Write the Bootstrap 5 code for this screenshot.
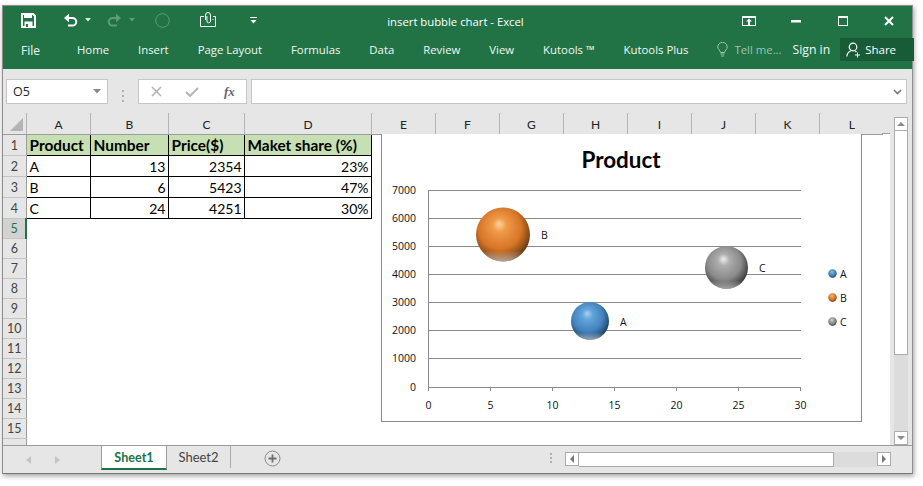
<!DOCTYPE html>
<html lang="en">
<head>
<meta charset="utf-8">
<title>insert bubble chart - Excel</title>
<link href="https://cdn.jsdelivr.net/npm/bootstrap@5.3.0/dist/css/bootstrap.min.css" rel="stylesheet">
<style>
html,body{margin:0;height:486px;background:#fff;overflow:hidden}
body{font-family:"Open Sans","Noto Sans",sans-serif;}
.xl-win{position:relative;margin:5px 0 0 2px;width:911px;height:469px;border:1px solid #8f8f8f;border-bottom-color:#777;background:#e6e6e6;box-shadow:1px 2px 5px rgba(0,0,0,.38)}
.xl-title{height:31px;background:#217346;color:#fff;display:grid;grid-template-columns:1fr auto 1fr;align-items:center;font-size:11.3px}
.xl-title-txt{padding-right:4px;padding-top:2px}
.xl-qat{padding:0 0 3px 18px}
.xl-qat svg,.xl-winbtn svg{display:block}
.m-a{margin-left:27px}.m-b{margin-left:7px}.m-c{margin-left:16px}.m-d{margin-left:7px}.m-e{margin-left:20px}.m-f{margin-left:30px}.m-g{margin-left:33px}
.xl-winbtn{padding:0 18px 1px 0}
.w-a{margin-left:35px}.w-b{margin-left:37px}.w-c{margin-left:36px}
.xl-tabs{height:32px;background:#217346;color:#f2f7f4;font-size:11.35px;padding:0 0 7px 18px;gap:29px;white-space:nowrap}
.xl-tabs .t-file{margin-right:8px;font-size:12px;padding-top:2px}
.xl-tell{color:#9dc4ad;gap:6px;margin-right:11px}
.xl-sign{margin-right:10px;font-size:12.2px;padding-top:2px}
.xl-share{width:74px;height:23px;background:#185c37;gap:4px;padding-left:6px;color:#fff;font-size:11.5px}
.xl-fbar{height:44px;padding:10px 5px 0 3px}
.xl-box{height:25px;background:#fff;border:1px solid #c6c6c6}
.xl-name{width:102px;font-size:12.5px;color:#222;padding:0 6px}
.xl-name span{padding-top:2px}
.xl-dots{width:30px}
.xl-fx{width:109px;padding-left:11px;gap:22px}
.xl-fxt{font-family:"Liberation Serif",serif;font-style:italic;font-weight:700;color:#666;font-size:13px;margin-left:3px}
.xl-input{margin-left:4px;flex:1 1 auto;padding-right:4px}
.xl-main{height:332px}
.xl-sheet{position:relative;width:888px;height:332px;background:#fff;overflow:hidden}
.xl-grid{border-collapse:collapse;table-layout:fixed;width:880px;font-family:Lato,"Liberation Sans",sans-serif;color:#000}
.xl-grid th,.xl-grid td{padding:3px 0 0;line-height:1;overflow:hidden;white-space:nowrap}
.xl-grid thead th{height:21px;background:#e6e6e6;font-weight:400;font-size:12px;text-align:center;color:#222;border-right:1px solid #b4b4b4;border-bottom:1px solid #9c9c9c;padding:3px 0 0 1px}
.xl-grid thead th:last-child{border-right:0}
.xl-grid tbody th{background:#e6e6e6;font-weight:400;font-size:12.5px;text-align:center;color:#444;border-right:1px solid #9c9c9c;border-bottom:1px solid #c4c4c4}
.xl-grid tr.r21{height:21px}.xl-grid tr.r20{height:20px}.xl-grid tr.r7{height:7px}
.xl-grid td.xl-d{border:1px solid #000;font-size:14px;padding:3px 2px 0 3px}
.xl-grid td.xl-h{background:#c6e0b4;font-weight:700;font-size:15.4px;padding-top:3px}
.xl-grid tbody th.xl-sel{background:#d2d2d2;color:#217346;border-right:2px solid #217346}
.xl-corner{position:relative}
.xl-corner svg{position:absolute;left:7px;top:5px}
.xl-fill{position:absolute;right:0;top:0;width:8px;height:21px;background:#e6e6e6;border-bottom:1px solid #9c9c9c}
.xl-chart{position:absolute;left:378px;top:21px;width:481px;height:288px;background:#fff;border:1px solid #8c8c8c;border-top:0}
.xl-chart svg{display:block}
.xl-vs{width:22px;padding:4px 4px 0 4px}
.xl-sbtn{width:14px;height:14px;background:#fff;border:1px solid #ababab;flex:0 0 auto}
.xl-track{width:14px;background:#dcdcdc;flex:1 1 auto}
.xl-thumb{height:224px;background:#fff;border:1px solid #ababab;border-top:0;width:14px;display:block}
.xl-bottom{height:28px;position:relative}
.xl-nav{width:98px;padding-left:23px;gap:22px}
.xl-tab1{width:66px;height:24px;background:#fff;border:1px solid #9c9c9c;border-top:0;border-bottom:2px solid #217346;color:#217346;font-weight:700;font-size:12.6px;font-family:Lato,sans-serif;padding-top:2px}
.xl-tab2{width:64px;height:22px;font-size:13px;color:#444;font-family:Lato,"Open Sans",sans-serif;border-right:1px solid #aaa;padding-top:2px}
.xl-plus{margin-left:33px}
.xl-rest{flex:1 1 auto;height:27px;padding-right:21px;padding-top:6px}
.xl-hs{width:326px;height:15px}
.xl-hthumb{width:255px;height:15px;background:#fff;border:1px solid #ababab;border-left:0}
.xl-htrack{flex:1 1 auto;height:15px;background:#dcdcdc}
.xl-hdots{margin-right:12px}
.xl-sheetline{border-top:1px solid #9c9c9c}
</style>
</head>
<body>
<div class="xl-win">
  <div class="xl-title">
    <div class="xl-qat d-flex align-items-center">
      <svg width="15" height="15" viewBox="0 0 15 15"><path d="M1 1h11l2 2v11H1z" fill="none" stroke="#fff" stroke-width="2"/><rect x="3" y="1" width="8" height="4" fill="#fff"/><rect x="3.5" y="8.5" width="8" height="5.5" fill="#fff"/><rect x="5" y="11" width="2" height="3" fill="#217346"/></svg>
      <svg class="m-a" width="15" height="14" viewBox="0 0 15 14"><path d="M1 5 6 .8v8.4z" fill="#fff"/><path d="M5 5h4.5a3.8 3.8 0 0 1 0 7.6H5" fill="none" stroke="#fff" stroke-width="2"/></svg>
      <svg class="m-b" width="6" height="4" viewBox="0 0 6 4"><path d="M0 0h6L3 3.5z" fill="#dcebe2"/></svg>
      <svg class="m-c" width="15" height="14" viewBox="0 0 15 14"><path d="M14 5 9 .8v8.4z" fill="#5c9c79"/><path d="M10 5H5.5a3.8 3.8 0 0 0 0 7.6H10" fill="none" stroke="#5c9c79" stroke-width="2"/></svg>
      <svg class="m-d" width="6" height="4" viewBox="0 0 6 4"><path d="M0 0h6L3 3.5z" fill="#5c9c79"/></svg>
      <svg class="m-e" width="15" height="15" viewBox="0 0 15 15"><circle cx="7.5" cy="7.5" r="6.8" fill="none" stroke="#5c9c79"/></svg>
      <svg class="m-f" width="17" height="16" viewBox="0 0 17 16"><path d="M4 4.500H.5v10h15v-10H13M12.500 7.500h1" fill="none" stroke="#fff"/><path d="M5.500 8V3a2.500 2.500 0 0 1 5 0v6a1.800 1.800 0 0 1-3.600 0V4" fill="none" stroke="#fff"/></svg>
      <svg class="m-g" width="7" height="8" viewBox="0 0 7 8"><rect y="1" width="7" height="1" fill="#fff"/><path d="M.5 4h6L3.500 7.500z" fill="#fff"/></svg>
    </div>
    <div class="xl-title-txt">insert bubble chart - Excel</div>
    <div class="xl-winbtn d-flex align-items-center justify-content-end">
      <svg width="14" height="10" viewBox="0 0 14 10"><rect x=".5" y=".5" width="13" height="9" fill="none" stroke="#fff"/><rect x="0" y="0" width="14" height="2" fill="#fff"/><path d="M7 2.500 10 5.500H8V9H6V5.500H4z" fill="#fff"/></svg>
      <svg class="w-a" width="10" height="3" viewBox="0 0 10 3"><rect width="10" height="2.500" fill="#fff"/></svg>
      <svg class="w-b" width="10" height="10" viewBox="0 0 10 10"><rect x=".5" y=".5" width="9" height="9" fill="none" stroke="#fff"/><rect width="10" height="2" fill="#fff"/></svg>
      <svg class="w-c" width="10" height="10" viewBox="0 0 10 10"><path d="M1 1l8 8M9 1l-8 8" stroke="#fff" stroke-width="2"/></svg>
    </div>
  </div>
  <div class="xl-tabs d-flex align-items-center">
    <span class="t-file">File</span><span>Home</span><span>Insert</span><span>Page Layout</span><span>Formulas</span><span>Data</span><span>Review</span><span>View</span><span>Kutools ™</span><span>Kutools Plus</span>
    <div class="d-flex align-items-center ms-auto">
      <span class="xl-tell d-flex align-items-center"><svg width="11" height="15" viewBox="0 0 11 15"><path d="M3.500 10.500C3 8 .8 7.500.8 5a4.700 4.700 0 0 1 9.400 0c0 2.500-2.200 3-2.700 5.500z" fill="none" stroke="#9dc4ad"/><path d="M3.500 12h4M4 14h3" stroke="#9dc4ad"/></svg>Tell me...</span>
      <span class="xl-sign">Sign in</span>
      <span class="xl-share d-flex align-items-center"><svg width="15" height="16" viewBox="0 0 15 16"><circle cx="7" cy="5" r="3.800" fill="none" stroke="#fff" stroke-width="1.200"/><path d="M.8 14.500C1 11.500 3 9.500 5 8.700M9 9l1.500 1" fill="none" stroke="#fff" stroke-width="1.200"/><path d="M11.500 10.500v5M9 13h5" stroke="#fff"/></svg>Share</span>
    </div>
  </div>
  <div class="xl-fbar d-flex">
    <div class="xl-box xl-name d-flex align-items-center justify-content-between"><span>O5</span><svg width="8" height="5" viewBox="0 0 8 5"><path d="M0 0h8L4 4.500z" fill="#8a8a8a"/></svg></div>
    <div class="xl-dots d-flex align-items-center justify-content-center"><svg width="3" height="12" viewBox="0 0 3 12"><path d="M0 0h2v2H0zM0 5h2v2H0zM0 10h2v2H0z" fill="#b0b0b0"/></svg></div>
    <div class="xl-box xl-fx d-flex align-items-center"><svg width="13" height="11" viewBox="0 0 13 11"><path d="M2 1l9 9M11 1l-9 9" stroke="#b4b4b4" stroke-width="1.600"/></svg><svg width="14" height="11" viewBox="0 0 14 11"><path d="M1 6l4 4 8-8" fill="none" stroke="#b4b4b4" stroke-width="2"/></svg><span class="xl-fxt">fx</span></div>
    <div class="xl-box xl-input d-flex align-items-center justify-content-end"><svg width="9" height="6" viewBox="0 0 9 6"><path d="M1 1l3.500 3.500L8 1" fill="none" stroke="#777" stroke-width="1.600"/></svg></div>
  </div>
  <div class="xl-main d-flex">
    <div class="xl-sheet">
      <table class="xl-grid">
        <colgroup><col style="width:23px"><col style="width:64px"><col style="width:78px"><col style="width:76px"><col style="width:127px"><col style="width:64px"><col style="width:64px"><col style="width:64px"><col style="width:64px"><col style="width:64px"><col style="width:64px"><col style="width:64px"><col style="width:64px"></colgroup>
        <thead><tr><th class="xl-corner"><svg width="13" height="13" viewBox="0 0 13 13"><path d="M13 0v13H0z" fill="#b4b4b4"/></svg></th><th>A</th><th>B</th><th>C</th><th>D</th><th>E</th><th>F</th><th>G</th><th>H</th><th>I</th><th>J</th><th>K</th><th>L</th></tr></thead>
        <tbody>
          <tr class="r21"><th>1</th><td class="xl-d xl-h">Product</td><td class="xl-d xl-h">Number</td><td class="xl-d xl-h">Price($)</td><td class="xl-d xl-h">Maket share (%)</td></tr>
          <tr class="r21"><th>2</th><td class="xl-d">A</td><td class="xl-d text-end">13</td><td class="xl-d text-end">2354</td><td class="xl-d text-end">23%</td></tr>
          <tr class="r21"><th>3</th><td class="xl-d">B</td><td class="xl-d text-end">6</td><td class="xl-d text-end">5423</td><td class="xl-d text-end">47%</td></tr>
          <tr class="r21"><th>4</th><td class="xl-d">C</td><td class="xl-d text-end">24</td><td class="xl-d text-end">4251</td><td class="xl-d text-end">30%</td></tr>
          <tr class="r20"><th class="xl-sel">5</th></tr>
          <tr class="r20"><th>6</th></tr><tr class="r20"><th>7</th></tr><tr class="r20"><th>8</th></tr><tr class="r20"><th>9</th></tr><tr class="r20"><th>10</th></tr><tr class="r20"><th>11</th></tr><tr class="r20"><th>12</th></tr><tr class="r20"><th>13</th></tr><tr class="r20"><th>14</th></tr><tr class="r20"><th>15</th></tr><tr class="r7"><th></th></tr>
        </tbody>
      </table>
      <div class="xl-fill"></div>
      <div class="xl-chart">
        <svg width="480" height="287" viewBox="382 134 480 287" font-family="Open Sans, Noto Sans, sans-serif" font-size="10.500" fill="#111">
          <defs>
            <radialGradient id="gB" cx=".45" cy=".42" r=".64" fx=".43" fy=".3"><stop offset="0" stop-color="#fdd49d"/><stop offset=".2" stop-color="#f09a4a"/><stop offset=".62" stop-color="#d67526"/><stop offset=".84" stop-color="#8a4c19"/><stop offset="1" stop-color="#2f1a08"/></radialGradient>
            <radialGradient id="gA" cx=".45" cy=".42" r=".64" fx=".43" fy=".3"><stop offset="0" stop-color="#a9d3f2"/><stop offset=".22" stop-color="#62a4da"/><stop offset=".62" stop-color="#4483bd"/><stop offset=".84" stop-color="#275680"/><stop offset="1" stop-color="#0f2234"/></radialGradient>
            <radialGradient id="gC" cx=".45" cy=".42" r=".64" fx=".43" fy=".3"><stop offset="0" stop-color="#ededed"/><stop offset=".22" stop-color="#adadad"/><stop offset=".62" stop-color="#8a8a8a"/><stop offset=".84" stop-color="#505050"/><stop offset="1" stop-color="#222"/></radialGradient>
            <linearGradient id="gR" x1="0" y1="0" x2="0" y2="1"><stop offset=".8" stop-color="#fff" stop-opacity="0"/><stop offset="1" stop-color="#fff" stop-opacity=".55"/></linearGradient>
          </defs>
          <g stroke="#8a8a8a" fill="none">
            <path d="M428 190.500H801M428 218.500H801M428 246.500H801M428 274.500H801M428 302.500H801M428 330.500H801M428 358.500H801M428 387.500H801"/>
            <path d="M428.500 190V388M490.500 387v4M552.500 387v4M614.500 387v4M676.500 387v4M738.500 387v4M800.500 387v4M428.500 387v4"/>
          </g>
          <text x="621" y="168" text-anchor="middle" font-family="Lato, sans-serif" font-weight="700" font-size="22.400" fill="#000">Product</text>
          <g text-anchor="end"><text x="416" y="194">7000</text><text x="416" y="222">6000</text><text x="416" y="250">5000</text><text x="416" y="278">4000</text><text x="416" y="306">3000</text><text x="416" y="334">2000</text><text x="416" y="362">1000</text><text x="416" y="391">0</text></g>
          <g text-anchor="middle"><text x="428.500" y="409">0</text><text x="490.500" y="409">5</text><text x="552.500" y="409">10</text><text x="614.500" y="409">15</text><text x="676.500" y="409">20</text><text x="738.500" y="409">25</text><text x="800.500" y="409">30</text></g>
          <circle cx="503" cy="234.500" r="27" fill="url(#gB)"/><circle cx="503" cy="234.500" r="27" fill="url(#gR)"/>
          <circle cx="726.500" cy="267.500" r="21.500" fill="url(#gC)"/><circle cx="726.500" cy="267.500" r="21.500" fill="url(#gR)"/>
          <circle cx="590" cy="321" r="19" fill="url(#gA)"/><circle cx="590" cy="321" r="19" fill="url(#gR)"/>
          <text x="541" y="239">B</text><text x="759" y="272">C</text><text x="620" y="326">A</text>
          <circle cx="832.500" cy="273.500" r="4.200" fill="url(#gA)"/><circle cx="832.500" cy="297.500" r="4.200" fill="url(#gB)"/><circle cx="832.500" cy="321.500" r="4.200" fill="url(#gC)"/>
          <text x="840" y="278">A</text><text x="840" y="302">B</text><text x="840" y="326">C</text>
        </svg>
      </div>
    </div>
    <div class="xl-vs d-flex flex-column">
      <div class="xl-sbtn d-flex align-items-center justify-content-center"><svg width="8" height="4" viewBox="0 0 8 4"><path d="M4 0l4 4H0z" fill="#8a8a8a"/></svg></div>
      <div class="xl-track"><span class="xl-thumb"></span></div>
      <div class="xl-sbtn d-flex align-items-center justify-content-center"><svg width="8" height="4" viewBox="0 0 8 4"><path d="M4 4l4-4H0z" fill="#8a8a8a"/></svg></div>
    </div>
  </div>
  <div class="xl-bottom d-flex xl-sheetline">
    <div class="xl-nav d-flex align-items-center"><svg width="6" height="8" viewBox="0 0 6 8"><path d="M5 0v8L0 4z" fill="#c4c4c4"/></svg><svg width="6" height="8" viewBox="0 0 6 8"><path d="M1 0v8l5-4z" fill="#c4c4c4"/></svg></div>
    <div class="xl-tab1 d-flex align-items-center justify-content-center">Sheet1</div>
    <div class="xl-tab2 d-flex align-items-center justify-content-center">Sheet2</div>
    <svg class="xl-plus mt-1" width="17" height="17" viewBox="0 0 17 17"><circle cx="8.500" cy="8.500" r="7.500" fill="none" stroke="#8a8a8a"/><path d="M8.500 4.500v8M4.500 8.500h8" stroke="#6e6e6e" stroke-width="1.800"/></svg>
    <div class="xl-rest d-flex justify-content-end align-items-start">
      <svg class="xl-hdots" width="3" height="12" viewBox="0 0 3 12"><path d="M0 1h2v2H0zM0 5h2v2H0zM0 9h2v2H0z" fill="#b0b0b0"/></svg>
      <div class="xl-hs d-flex">
        <div class="xl-sbtn d-flex align-items-center justify-content-center"><svg width="4" height="8" viewBox="0 0 4 8"><path d="M0 4l4-4v8z" fill="#777"/></svg></div>
        <div class="xl-hthumb"></div>
        <div class="xl-htrack"></div>
        <div class="xl-sbtn d-flex align-items-center justify-content-center"><svg width="4" height="8" viewBox="0 0 4 8"><path d="M4 4L0 0v8z" fill="#777"/></svg></div>
      </div>
    </div>
  </div>
</div>
<script src="https://cdn.jsdelivr.net/npm/bootstrap@5.3.0/dist/js/bootstrap.bundle.min.js"></script>
</body>
</html>
